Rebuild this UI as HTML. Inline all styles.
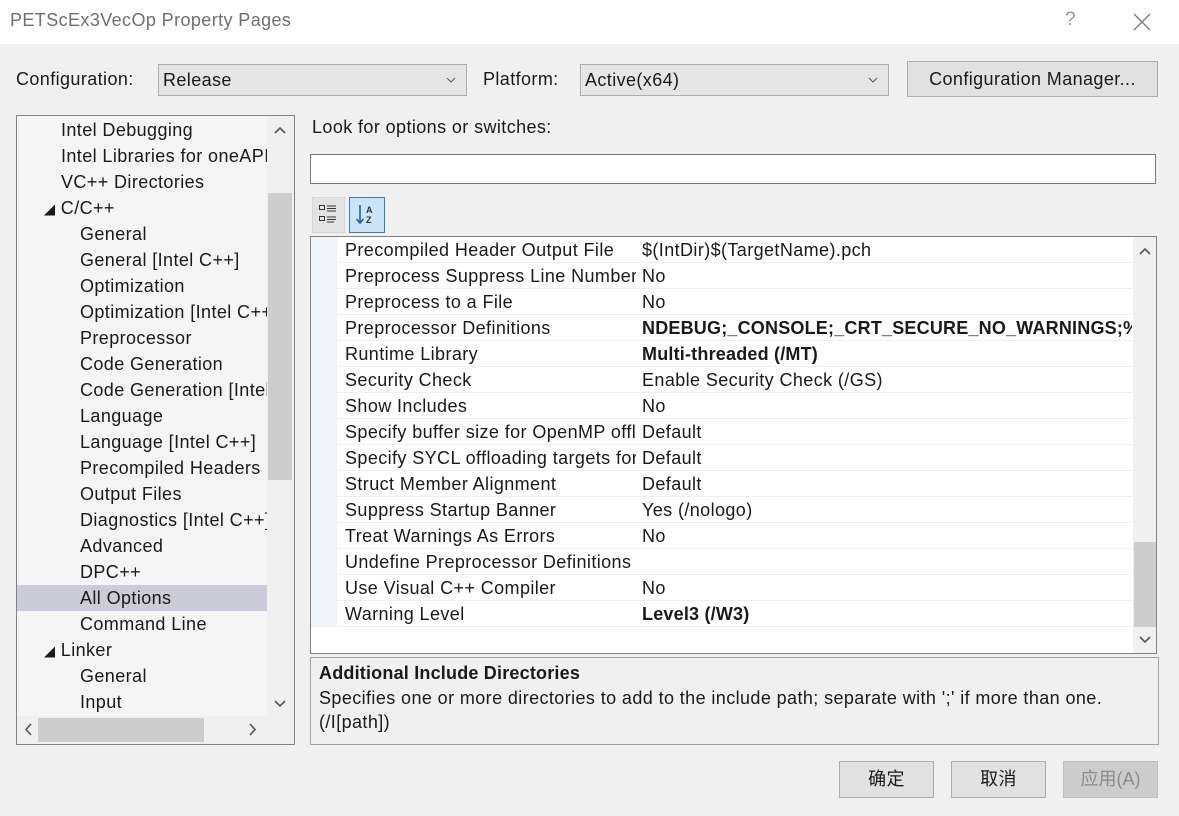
<!DOCTYPE html>
<html><head><meta charset="utf-8"><style>
*{box-sizing:border-box;margin:0;padding:0}
body{width:1179px;height:816px;background:#f0f0f0;font-family:"Liberation Sans","Noto Sans CJK SC",sans-serif;font-size:18px;letter-spacing:0.4px;color:#1a1a1a;position:relative;overflow:hidden}
.a{position:absolute;white-space:nowrap}
.combo{background:#e5e5e5;border:1px solid #adadad;height:32px;line-height:31px;padding-left:4px}
.btn{background:#e1e1e1;border:1px solid #adadad;text-align:center}
.chev{position:absolute;right:10px;top:0;font-size:12px;color:#555}
.tree div{position:absolute;height:26px;line-height:27px;white-space:nowrap}
.row{position:absolute;left:26px;width:796px;height:26px;line-height:27px;border-bottom:1px solid #f0f0f0;white-space:nowrap}
.row .n{position:absolute;left:8px;width:291px;overflow:hidden}
.row .v{position:absolute;left:305px;width:490px;overflow:hidden}
b{font-weight:bold;letter-spacing:0.2px}
</style></head><body>
<div class="a" style="left:0;top:0;width:1179px;height:44px;background:#fff"></div>
<div class="a" style="left:10px;top:10px;font-size:18px;color:#707070">PETScEx3VecOp Property Pages</div>
<div class="a" style="left:1065px;top:9px;font-size:19px;color:#999">?</div>
<svg class="a" style="left:1133px;top:13px" width="18" height="18"><path d="M1 1L17 17M17 1L1 17" stroke="#777" stroke-width="1.3"/></svg>

<div class="a" style="left:16px;top:69px">Configuration:</div>
<div class="a combo" style="left:158px;top:64px;width:309px">Release<svg class="chev" style="top:11px" width="10" height="8"><path d="M1 2L5 6L9 2" stroke="#555" fill="none"/></svg></div>
<div class="a" style="left:483px;top:69px">Platform:</div>
<div class="a combo" style="left:580px;top:64px;width:309px">Active(x64)<svg class="chev" style="top:11px" width="10" height="8"><path d="M1 2L5 6L9 2" stroke="#555" fill="none"/></svg></div>
<div class="a btn" style="left:907px;top:61px;width:251px;height:36px;line-height:34px">Configuration Manager...</div>

<div class="a" style="left:16px;top:115px;width:279px;height:630px;border:1px solid #828282;background:#f5f5f5"></div>
<div class="a" style="left:267px;top:116px;width:27px;height:600px;background:#f0f0f0"></div>
<div class="a" style="left:268px;top:193px;width:24px;height:287px;background:#cdcdcd"></div>
<svg class="a" style="left:274px;top:126px" width="12" height="10"><path d="M1 7L6 2L11 7" stroke="#555" stroke-width="1.6" fill="none"/></svg>
<svg class="a" style="left:274px;top:698px" width="12" height="10"><path d="M1 3L6 8L11 3" stroke="#555" stroke-width="1.6" fill="none"/></svg>
<div class="a" style="left:17px;top:716px;width:277px;height:28px;background:#f0f0f0"></div>
<div class="a" style="left:38px;top:718px;width:166px;height:24px;background:#cdcdcd"></div>
<svg class="a" style="left:24px;top:723px" width="10" height="13"><path d="M7 1L2 6.5L7 12" stroke="#555" stroke-width="1.6" fill="none"/></svg>
<svg class="a" style="left:247px;top:723px" width="10" height="13"><path d="M3 1L8 6.5L3 12" stroke="#555" stroke-width="1.6" fill="none"/></svg>
<div class="a" style="left:17px;top:585px;width:250px;height:26px;background:#cbcbd9"></div>
<div class="tree">
<div style="left:61px;top:117px">Intel Debugging</div>
<div style="left:61px;top:143px;width:206px;overflow:hidden">Intel Libraries for oneAPI</div>
<div style="left:61px;top:169px">VC++ Directories</div>
<div style="left:44px;top:195px"><span style="font-size:11px">◢</span> C/C++</div>
<div style="left:80px;top:221px">General</div>
<div style="left:80px;top:247px">General [Intel C++]</div>
<div style="left:80px;top:273px">Optimization</div>
<div style="left:80px;top:299px;width:187px;overflow:hidden">Optimization [Intel C++]</div>
<div style="left:80px;top:325px">Preprocessor</div>
<div style="left:80px;top:351px">Code Generation</div>
<div style="left:80px;top:377px;width:187px;overflow:hidden">Code Generation [Intel C++]</div>
<div style="left:80px;top:403px">Language</div>
<div style="left:80px;top:429px">Language [Intel C++]</div>
<div style="left:80px;top:455px;width:187px;overflow:hidden">Precompiled Headers</div>
<div style="left:80px;top:481px">Output Files</div>
<div style="left:80px;top:507px;width:187px;overflow:hidden">Diagnostics [Intel C++]</div>
<div style="left:80px;top:533px">Advanced</div>
<div style="left:80px;top:559px">DPC++</div>
<div style="left:80px;top:585px">All Options</div>
<div style="left:80px;top:611px">Command Line</div>
<div style="left:44px;top:637px"><span style="font-size:11px">◢</span> Linker</div>
<div style="left:80px;top:663px">General</div>
<div style="left:80px;top:689px">Input</div>
</div>

<div class="a" style="left:312px;top:117px">Look for options or switches:</div>
<div class="a" style="left:310px;top:154px;width:846px;height:30px;background:#fff;border:1px solid #7a7a7a"></div>
<div class="a" style="left:312px;top:197px;width:33px;height:36px;background:#e3e3e3;border:1px solid #d5d5d5"></div>
<svg class="a" style="left:318px;top:203px" width="24" height="24"><g fill="none" stroke="#333"><rect x="1.5" y="2.5" width="5" height="4"/><rect x="1.5" y="13.5" width="5" height="4"/></g><g stroke="#333"><path d="M9 3h9M9 5.5h9M9 8h9M9 14h9M9 16.5h9M9 19h7"/></g></svg>
<div class="a" style="left:349px;top:197px;width:36px;height:36px;background:#cce4f7;border:1px solid #3d7bb8"></div>
<svg class="a" style="left:355px;top:203px" width="24" height="24"><path d="M5 2V20M1.5 16L5 20L8.5 16" stroke="#1e5fa8" stroke-width="1.6" fill="none"/><text x="11" y="10" font-size="9" font-weight="bold" fill="#333" font-family="Liberation Sans">A</text><text x="11" y="20" font-size="9" font-weight="bold" fill="#333" font-family="Liberation Sans">Z</text></svg>

<div class="a" style="left:310px;top:236px;width:847px;height:418px;background:#fff;border:1px solid #828282;overflow:hidden">
<div class="a" style="left:0;top:0;width:26px;height:390px;background:#f0f4f9"></div>
<div class="row" style="top:0"><span class="n">Precompiled Header Output File</span><span class="v">$(IntDir)$(TargetName).pch</span></div>
<div class="row" style="top:26px"><span class="n">Preprocess Suppress Line Numbers</span><span class="v">No</span></div>
<div class="row" style="top:52px"><span class="n">Preprocess to a File</span><span class="v">No</span></div>
<div class="row" style="top:78px"><span class="n">Preprocessor Definitions</span><span class="v"><b>NDEBUG;_CONSOLE;_CRT_SECURE_NO_WARNINGS;%(</b></span></div>
<div class="row" style="top:104px"><span class="n">Runtime Library</span><span class="v"><b>Multi-threaded (/MT)</b></span></div>
<div class="row" style="top:130px"><span class="n">Security Check</span><span class="v">Enable Security Check (/GS)</span></div>
<div class="row" style="top:156px"><span class="n">Show Includes</span><span class="v">No</span></div>
<div class="row" style="top:182px"><span class="n">Specify buffer size for OpenMP offloading</span><span class="v">Default</span></div>
<div class="row" style="top:208px"><span class="n">Specify SYCL offloading targets for</span><span class="v">Default</span></div>
<div class="row" style="top:234px"><span class="n">Struct Member Alignment</span><span class="v">Default</span></div>
<div class="row" style="top:260px"><span class="n">Suppress Startup Banner</span><span class="v">Yes (/nologo)</span></div>
<div class="row" style="top:286px"><span class="n">Treat Warnings As Errors</span><span class="v">No</span></div>
<div class="row" style="top:312px"><span class="n">Undefine Preprocessor Definitions</span><span class="v"></span></div>
<div class="row" style="top:338px"><span class="n">Use Visual C++ Compiler</span><span class="v">No</span></div>
<div class="row" style="top:364px"><span class="n">Warning Level</span><span class="v"><b>Level3 (/W3)</b></span></div>
<div class="a" style="left:822px;top:0;width:24px;height:416px;background:#f0f0f0"></div>
<div class="a" style="left:823px;top:305px;width:22px;height:85px;background:#cdcdcd"></div>
<svg class="a" style="left:828px;top:10px" width="12" height="10"><path d="M1 7L6 2L11 7" stroke="#555" stroke-width="1.6" fill="none"/></svg>
<svg class="a" style="left:828px;top:397px" width="12" height="10"><path d="M1 3L6 8L11 3" stroke="#555" stroke-width="1.6" fill="none"/></svg>
</div>

<div class="a" style="left:310px;top:657px;width:849px;height:88px;border:1px solid #a0a0a0;background:#f0f0f0"></div>
<div class="a" style="left:319px;top:663px;font-weight:bold;letter-spacing:0.2px">Additional Include Directories</div>
<div class="a" style="left:319px;top:688px">Specifies one or more directories to add to the include path; separate with ';' if more than one.</div>
<div class="a" style="left:319px;top:712px">(/I[path])</div>

<div class="a btn" style="left:839px;top:761px;width:95px;height:37px;line-height:35px">确定</div>
<div class="a btn" style="left:951px;top:761px;width:95px;height:37px;line-height:35px">取消</div>
<div class="a btn" style="left:1063px;top:761px;width:95px;height:37px;line-height:35px;background:#cccccc;border-color:#bfbfbf;color:#8a8a8a;letter-spacing:0">应用(A)</div>
</body></html>
